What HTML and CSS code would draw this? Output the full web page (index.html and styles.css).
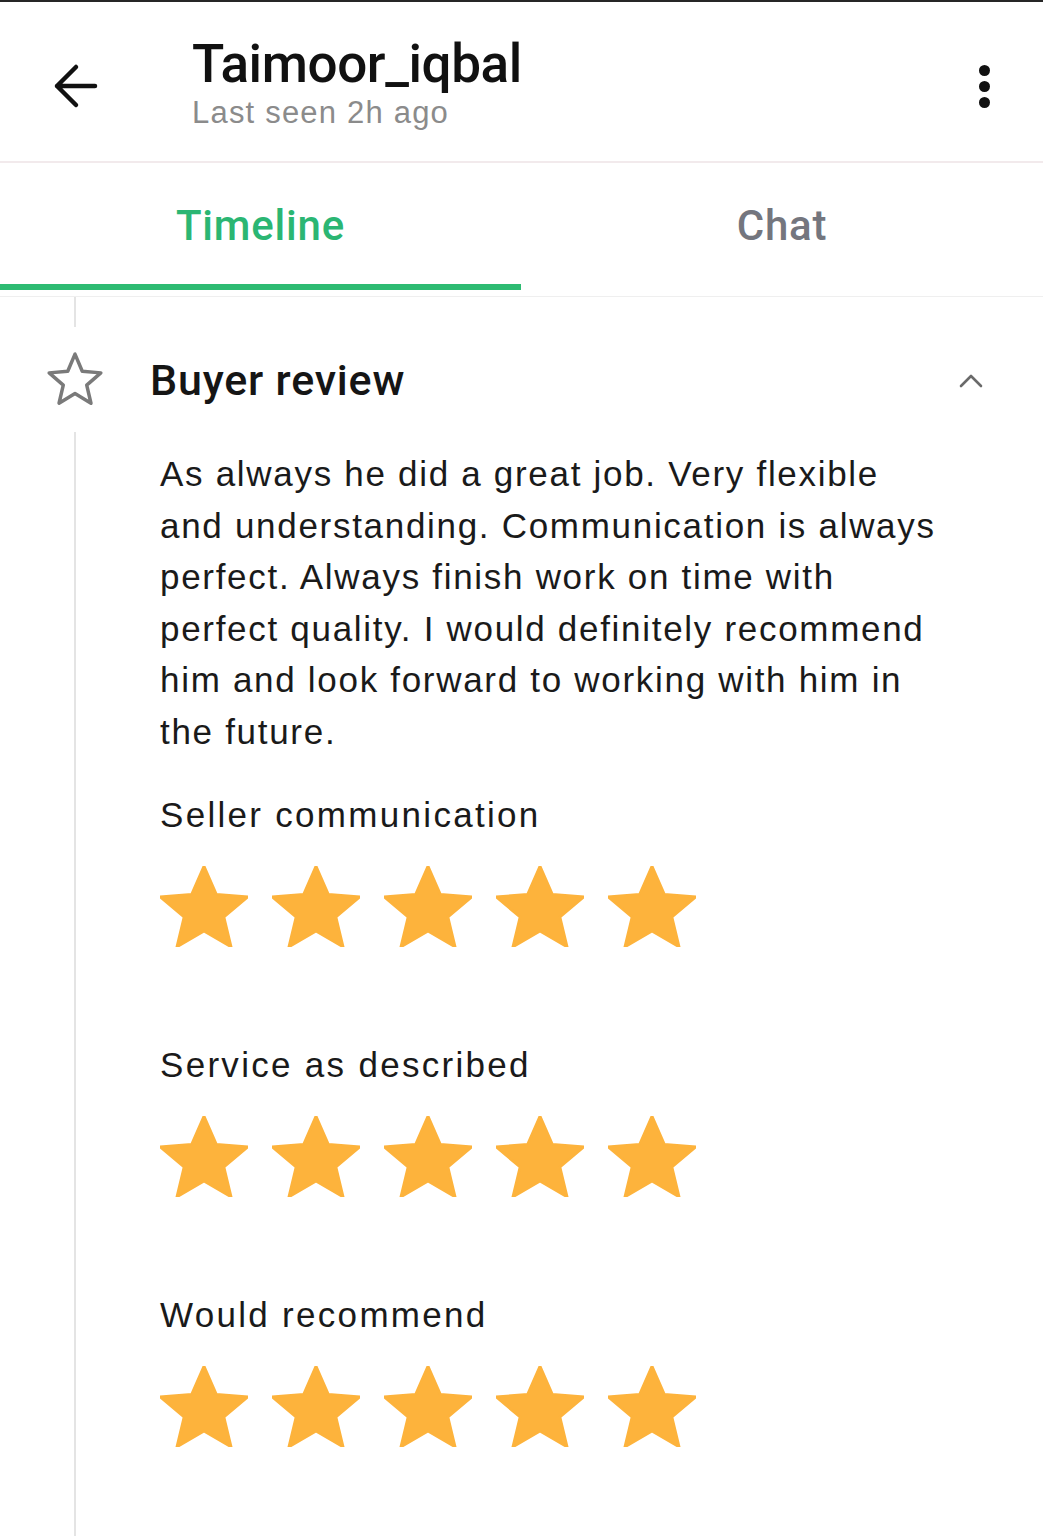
FILE: index.html
```html
<!DOCTYPE html>
<html lang="en">
<head>
<meta charset="utf-8">
<title>Taimoor_iqbal</title>
<link rel="stylesheet" href="styles.css">
</head>
<body>
<div class="page">
  <header class="topbar">
    <button class="icon-btn back" aria-label="Back">
      <svg width="48" height="48" viewBox="0 0 48 48"><path d="M44 24H6M25 5L6 24l19 19" fill="none" stroke="#111" stroke-width="4.5" stroke-linecap="round" stroke-linejoin="round"/></svg>
    </button>
    <div class="who">
      <div class="name">Taimoor_iqbal</div>
      <div class="seen">Last seen 2h ago</div>
    </div>
    <button class="icon-btn more" aria-label="More">
      <span class="dot"></span><span class="dot"></span><span class="dot"></span>
    </button>
  </header>

  <nav class="tabs-wrap">
    <div class="tabs">
      <div class="tab active">Timeline</div>
      <div class="tab">Chat</div>
    </div>
  </nav>

  <section class="timeline">
    <div class="rail">
      <div class="rail-seg top"></div>
      <div class="rail-icon">
        <svg width="62" height="62" viewBox="0 0 24 24"><path d="M12 17.27L18.18 21l-1.64-7.03L22 9.24l-7.19-.61L12 2 9.19 8.63 2 9.24l5.46 4.73L5.82 21z" fill="none" stroke="#7a7a7a" stroke-width="1.35" stroke-linejoin="round"/></svg>
      </div>
      <div class="rail-seg fill"></div>
    </div>
    <div class="entry">
      <div class="entry-head">
        <h2 class="entry-title">Buyer review</h2>
        <svg class="chev" width="26" height="16" viewBox="0 0 26 16"><path d="M3 13L13 3l10 10" fill="none" stroke="#6a6a6a" stroke-width="2.6" stroke-linecap="round" stroke-linejoin="round"/></svg>
      </div>
      <p class="review">As always he did a great job. Very flexible<br>and understanding. Communication is always<br>perfect. Always finish work on time with<br>perfect quality. I would definitely recommend<br>him and look forward to working with him in<br>the future.</p>

      <div class="ratings">
        <div class="rating">
          <div class="rating-label">Seller communication</div>
          <div class="stars">
            <svg class="star" viewBox="2 2 20 19" preserveAspectRatio="none"><path d="M12 17.27L18.18 21l-1.64-7.03L22 9.24l-7.19-.61L12 2 9.19 8.63 2 9.24l5.46 4.73L5.82 21z"/></svg>
            <svg class="star" viewBox="2 2 20 19" preserveAspectRatio="none"><path d="M12 17.27L18.18 21l-1.64-7.03L22 9.24l-7.19-.61L12 2 9.19 8.63 2 9.24l5.46 4.73L5.82 21z"/></svg>
            <svg class="star" viewBox="2 2 20 19" preserveAspectRatio="none"><path d="M12 17.27L18.18 21l-1.64-7.03L22 9.24l-7.19-.61L12 2 9.19 8.63 2 9.24l5.46 4.73L5.82 21z"/></svg>
            <svg class="star" viewBox="2 2 20 19" preserveAspectRatio="none"><path d="M12 17.27L18.18 21l-1.64-7.03L22 9.24l-7.19-.61L12 2 9.19 8.63 2 9.24l5.46 4.73L5.82 21z"/></svg>
            <svg class="star" viewBox="2 2 20 19" preserveAspectRatio="none"><path d="M12 17.27L18.18 21l-1.64-7.03L22 9.24l-7.19-.61L12 2 9.19 8.63 2 9.24l5.46 4.73L5.82 21z"/></svg>
          </div>
        </div>

        <div class="rating">
          <div class="rating-label">Service as described</div>
          <div class="stars">
            <svg class="star" viewBox="2 2 20 19" preserveAspectRatio="none"><path d="M12 17.27L18.18 21l-1.64-7.03L22 9.24l-7.19-.61L12 2 9.19 8.63 2 9.24l5.46 4.73L5.82 21z"/></svg>
            <svg class="star" viewBox="2 2 20 19" preserveAspectRatio="none"><path d="M12 17.27L18.18 21l-1.64-7.03L22 9.24l-7.19-.61L12 2 9.19 8.63 2 9.24l5.46 4.73L5.82 21z"/></svg>
            <svg class="star" viewBox="2 2 20 19" preserveAspectRatio="none"><path d="M12 17.27L18.18 21l-1.64-7.03L22 9.24l-7.19-.61L12 2 9.19 8.63 2 9.24l5.46 4.73L5.82 21z"/></svg>
            <svg class="star" viewBox="2 2 20 19" preserveAspectRatio="none"><path d="M12 17.27L18.18 21l-1.64-7.03L22 9.24l-7.19-.61L12 2 9.19 8.63 2 9.24l5.46 4.73L5.82 21z"/></svg>
            <svg class="star" viewBox="2 2 20 19" preserveAspectRatio="none"><path d="M12 17.27L18.18 21l-1.64-7.03L22 9.24l-7.19-.61L12 2 9.19 8.63 2 9.24l5.46 4.73L5.82 21z"/></svg>
          </div>
        </div>

        <div class="rating">
          <div class="rating-label">Would recommend</div>
          <div class="stars">
            <svg class="star" viewBox="2 2 20 19" preserveAspectRatio="none"><path d="M12 17.27L18.18 21l-1.64-7.03L22 9.24l-7.19-.61L12 2 9.19 8.63 2 9.24l5.46 4.73L5.82 21z"/></svg>
            <svg class="star" viewBox="2 2 20 19" preserveAspectRatio="none"><path d="M12 17.27L18.18 21l-1.64-7.03L22 9.24l-7.19-.61L12 2 9.19 8.63 2 9.24l5.46 4.73L5.82 21z"/></svg>
            <svg class="star" viewBox="2 2 20 19" preserveAspectRatio="none"><path d="M12 17.27L18.18 21l-1.64-7.03L22 9.24l-7.19-.61L12 2 9.19 8.63 2 9.24l5.46 4.73L5.82 21z"/></svg>
            <svg class="star" viewBox="2 2 20 19" preserveAspectRatio="none"><path d="M12 17.27L18.18 21l-1.64-7.03L22 9.24l-7.19-.61L12 2 9.19 8.63 2 9.24l5.46 4.73L5.82 21z"/></svg>
            <svg class="star" viewBox="2 2 20 19" preserveAspectRatio="none"><path d="M12 17.27L18.18 21l-1.64-7.03L22 9.24l-7.19-.61L12 2 9.19 8.63 2 9.24l5.46 4.73L5.82 21z"/></svg>
          </div>
        </div>
      </div>
    </div>
  </section>
</div>
</body>
</html>
```

FILE: styles.css
```css
* { box-sizing: border-box; }
html, body { margin: 0; padding: 0; background: #fff; }
body {
  font-family: "Liberation Sans", Arial, sans-serif;
  color: #1c1c1c;
}
.page {
  min-height: 100vh;
  display: flex;
  flex-direction: column;
  border-top: 2px solid #262626;
}

/* header */
.topbar {
  height: 161px;
  display: flex;
  align-items: center;
  padding-top: 9px;
  border-bottom: 2px solid #f2eaec;
}
.icon-btn {
  background: none;
  border: 0;
  padding: 0;
  cursor: pointer;
}
.back {
  width: 48px;
  height: 48px;
  margin-left: 51px;
  display: flex;
}
.who {
  margin-left: 93px;
  margin-top: -7px;
  flex: 1;
}
.name {
  font-family: Roboto, "Liberation Sans", sans-serif;
  font-weight: 500;
  font-size: 53px;
  line-height: 60px;
  color: #111;
  letter-spacing: -0.4px;
}
.seen {
  font-size: 31px;
  line-height: 38px;
  color: #8b8b8b;
  letter-spacing: 1.2px;
}
.more {
  width: 40px;
  display: flex;
  flex-direction: column;
  align-items: center;
  gap: 5px;
  margin-right: 39px;
}
.dot {
  width: 11px;
  height: 11px;
  border-radius: 50%;
  background: #111;
}

/* tabs */
.tabs-wrap {
  padding-bottom: 6px;
  border-bottom: 1px solid #efefef;
}
.tabs {
  display: grid;
  grid-template-columns: 521px 1fr;
  height: 127px;
}
.tab {
  display: flex;
  align-items: center;
  justify-content: center;
  padding-top: 4px;
  font-family: Roboto, "Liberation Sans", sans-serif;
  font-weight: 500;
  font-size: 42px;
  color: #74767e;
  border-bottom: 6px solid transparent;
  letter-spacing: 0.8px;
}
.tab.active {
  color: #2bb673;
  border-bottom-color: #2dbb72;
}

/* timeline */
.timeline {
  flex: 1;
  display: grid;
  grid-template-columns: 150px 1fr;
}
.rail {
  display: flex;
  flex-direction: column;
  align-items: flex-start;
}
.rail-seg {
  width: 2px;
  margin-left: 74px;
  background: #e4e4e4;
}
.rail-seg.top { height: 30px; }
.rail-seg.fill { flex: 1; }
.rail-icon {
  width: 150px;
  height: 105px;
  display: flex;
  align-items: center;
  padding-left: 44px;
}
.entry {
  padding-right: 61px;
  padding-bottom: 80px;
}
.entry-head {
  margin-top: 30px;
  height: 105px;
  display: flex;
  align-items: center;
  justify-content: space-between;
}
.entry-title {
  margin: 0;
  font-family: Roboto, "Liberation Sans", sans-serif;
  font-weight: 500;
  font-size: 43px;
  color: #151515;
  letter-spacing: 0.8px;
}
.chev { margin-right: -2px; margin-top: 2px; }
.review {
  margin: 16px 0 0 10px;
  font-size: 35px;
  line-height: 51.5px;
  letter-spacing: 1.7px;
  white-space: nowrap;
  color: #1a1a1a;
}
.ratings {
  margin: 38px 0 0 10px;
  display: flex;
  flex-direction: column;
  gap: 98px;
}
.rating-label {
  font-size: 35px;
  line-height: 40px;
  letter-spacing: 2.3px;
  color: #1a1a1a;
}
.stars {
  display: flex;
  gap: 24px;
  margin-top: 31px;
}
.star {
  width: 88px;
  height: 81px;
  fill: #fdb33c;
  stroke: #fdb33c;
  stroke-width: 0.6;
  stroke-linejoin: round;
}
```
